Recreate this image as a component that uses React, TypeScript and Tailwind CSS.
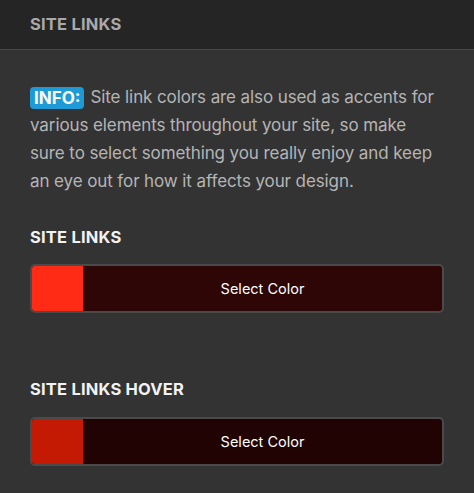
import React from 'react';

function ColorPicker({ swatch, bg }: { swatch: string; bg: string }) {
    return (
        <button className={`flex h-[49px] w-full overflow-hidden rounded-[5px] border-2 border-[#4a4a4a] ${bg}`}>
            <span className={`h-full w-[51px] shrink-0 ${swatch}`} />
            <span className="flex flex-1 items-center justify-center text-[14.5px] text-white">Select Color</span>
        </button>
    );
}

export default function App() {
    return (
        <div className="h-[493px] w-[474px] bg-[#333333] font-['Inter','Liberation_Sans',sans-serif]">
            <div className="flex h-[50px] items-center border-b border-[#474747] bg-[#252525] px-[30px]">
                <h2 className="text-[16.5px] font-bold tracking-[0.2px] text-[#a9a9a9]">SITE LINKS</h2>
            </div>
            <div className="px-[30px] pt-[33px]">
                <p className="pr-[6px] text-[17px] leading-[28px] tracking-[-0.1px] text-[#b5b5b5]">
                    <span className="mr-[6px] inline-block h-[22px] rounded-[4px] bg-[#1e9ad6] px-[4px] align-[-1px] text-[17px] font-bold leading-[22px] tracking-[0px] text-white">INFO:</span>
                    <span>Site link colors are also used as accents for various elements throughout your site, so make sure to select something you really enjoy and keep an eye out for how it affects your design.</span>
                </p>
                <h3 className="mt-[32px] text-[16.5px] font-bold leading-[20px] tracking-[0.2px] text-[#f2f2f2]">SITE LINKS</h3>
                <div className="mt-[17px]">
                    <ColorPicker swatch="bg-[#ff2b14]" bg="bg-[#2d0605]" />
                </div>
                <h3 className="mt-[66px] text-[16.5px] font-bold leading-[20px] tracking-[0.2px] text-[#f2f2f2]">SITE LINKS HOVER</h3>
                <div className="mt-[18px]">
                    <ColorPicker swatch="bg-[#c41a04]" bg="bg-[#200302]" />
                </div>
            </div>
        </div>
    );
}
